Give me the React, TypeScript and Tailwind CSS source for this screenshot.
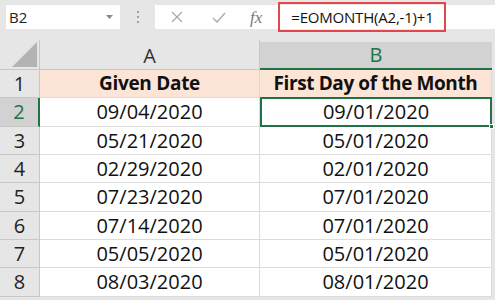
import React from 'react';

const rows = [
  { n: 2, given: '09/04/2020', first: '09/01/2020', h: 'h-[29px]' },
  { n: 3, given: '05/21/2020', first: '05/01/2020', h: 'h-[28px]' },
  { n: 4, given: '02/29/2020', first: '02/01/2020', h: 'h-[28px]' },
  { n: 5, given: '07/23/2020', first: '07/01/2020', h: 'h-[29px]' },
  { n: 6, given: '07/14/2020', first: '07/01/2020', h: 'h-[28px]' },
  { n: 7, given: '05/05/2020', first: '05/01/2020', h: 'h-[28px]' },
  { n: 8, given: '08/03/2020', first: '08/01/2020', h: 'h-[29px]' },
];

function FormulaBar() {
  return (
    <div className="h-[40px] flex items-start pt-[5px] shrink-0">
      {/* Name box */}
      <div className="ml-[6px] w-[114px] h-[24px] bg-white flex items-center justify-between pl-[3px] pr-[7px]">
        <span className="text-[15px] text-[#222]">B2</span>
        <svg width="7" height="4" viewBox="0 0 7 4">
          <path d="M0 0 L7 0 L3.5 4 Z" fill="#8a8a8a" />
        </svg>
      </div>
      <div className="w-[35px] h-[24px] flex flex-col items-center justify-center gap-[3px]">
        <span className="w-[2px] h-[2px] bg-[#a0a0a0]" />
        <span className="w-[2px] h-[2px] bg-[#a0a0a0]" />
        <span className="w-[2px] h-[2px] bg-[#a0a0a0]" />
      </div>
      {/* Formula input */}
      <div className="flex-1 h-[24px] bg-white flex items-center">
        <svg className="ml-[16px]" width="12" height="12" viewBox="0 0 12 12">
          <path d="M1 1 L11 11 M11 1 L1 11" stroke="#a8a8a8" strokeWidth="1.2" fill="none" />
        </svg>
        <svg className="ml-[29px]" width="14" height="11" viewBox="0 0 14 11">
          <path d="M1 6 L5 10 L13 1" stroke="#a8a8a8" strokeWidth="1.3" fill="none" />
        </svg>
        <span className="ml-[24px] text-[17px] italic text-[#7a7a7a] font-['Liberation_Serif',serif] leading-none">fx</span>
        <div className="ml-[16px] w-[168px] h-[30px] border-2 border-[#e2474b] flex items-center pl-[11px]">
          <span className="text-[15px] text-[#111] tracking-[-0.2px]">=EOMONTH(A2,-1)+1</span>
        </div>
      </div>
    </div>
  );
}

export default function App() {
  return (
    <div className="w-[495px] h-[300px] bg-[#e6e6e6] overflow-hidden flex flex-col font-['Open_Sans',sans-serif]">
      <FormulaBar />

      {/* Column headers */}
      <div className="h-[30px] flex shrink-0">
        <div className="w-[40px] border-r border-b border-[#c8c8c8] flex items-end justify-end pr-[2px] pb-[2px]">
          <svg width="25" height="25" viewBox="0 0 25 25">
            <path d="M25 0 L25 25 L0 25 Z" fill="#b3b3b3" />
          </svg>
        </div>
        <div className="w-[220px] border-r border-b border-[#c8c8c8] flex items-center justify-center text-[20px] text-[#333] pt-[2px]">
          A
        </div>
        <div className="w-[232px] bg-[#d2d2d2] border-b-2 border-[#217346] mt-[2px] flex items-center justify-center text-[20px] text-[#217346]">
          B
        </div>
      </div>

      {/* Row 1: headings */}
      <div className="h-[28px] flex shrink-0">
        <div className="w-[40px] border-r border-b border-[#c8c8c8] flex items-center justify-center text-[20px] text-[#222]">
          1
        </div>
        <div className="w-[220px] bg-[#fce4d6] border-r border-b border-[#d9d9d9] flex items-center justify-center text-[19px] font-bold text-[#111] tracking-[-0.3px]">
          Given Date
        </div>
        <div className="w-[232px] bg-[#fce4d6] border-r border-b border-[#d9d9d9] flex items-center justify-center text-[19px] font-bold text-[#111] tracking-[-0.4px]">
          First Day of the Month
        </div>
      </div>

      {rows.map((r) => {
        const selected = r.n === 2;
        return (
          <div key={r.n} className={`${r.h} flex shrink-0`}>
            <div
              className={
                selected
                  ? 'w-[40px] bg-[#d2d2d2] border-r-2 border-b border-r-[#217346] border-b-[#c8c8c8] flex items-center justify-center text-[20px] text-[#217346]'
                  : 'w-[40px] border-r border-b border-[#c8c8c8] flex items-center justify-center text-[20px] text-[#222]'
              }
            >
              {r.n}
            </div>
            <div className="w-[220px] bg-white border-r border-b border-[#dcdcdc] flex items-center justify-center text-[20px] text-[#111]">
              {r.given}
            </div>
            <div
              className={
                selected
                  ? 'relative w-[232px] bg-white shadow-[inset_0_0_0_2px_#217346] -mt-[1px] h-[30px] flex items-center justify-center text-[20px] text-[#111]'
                  : 'w-[232px] bg-white border-r border-b border-[#dcdcdc] flex items-center justify-center text-[20px] text-[#111]'
              }
            >
              {r.first}
              {selected && (
                <span className="absolute right-[-2px] bottom-[-2px] w-[5px] h-[5px] bg-[#217346] border border-white" />
              )}
            </div>
          </div>
        );
      })}
    </div>
  );
}
